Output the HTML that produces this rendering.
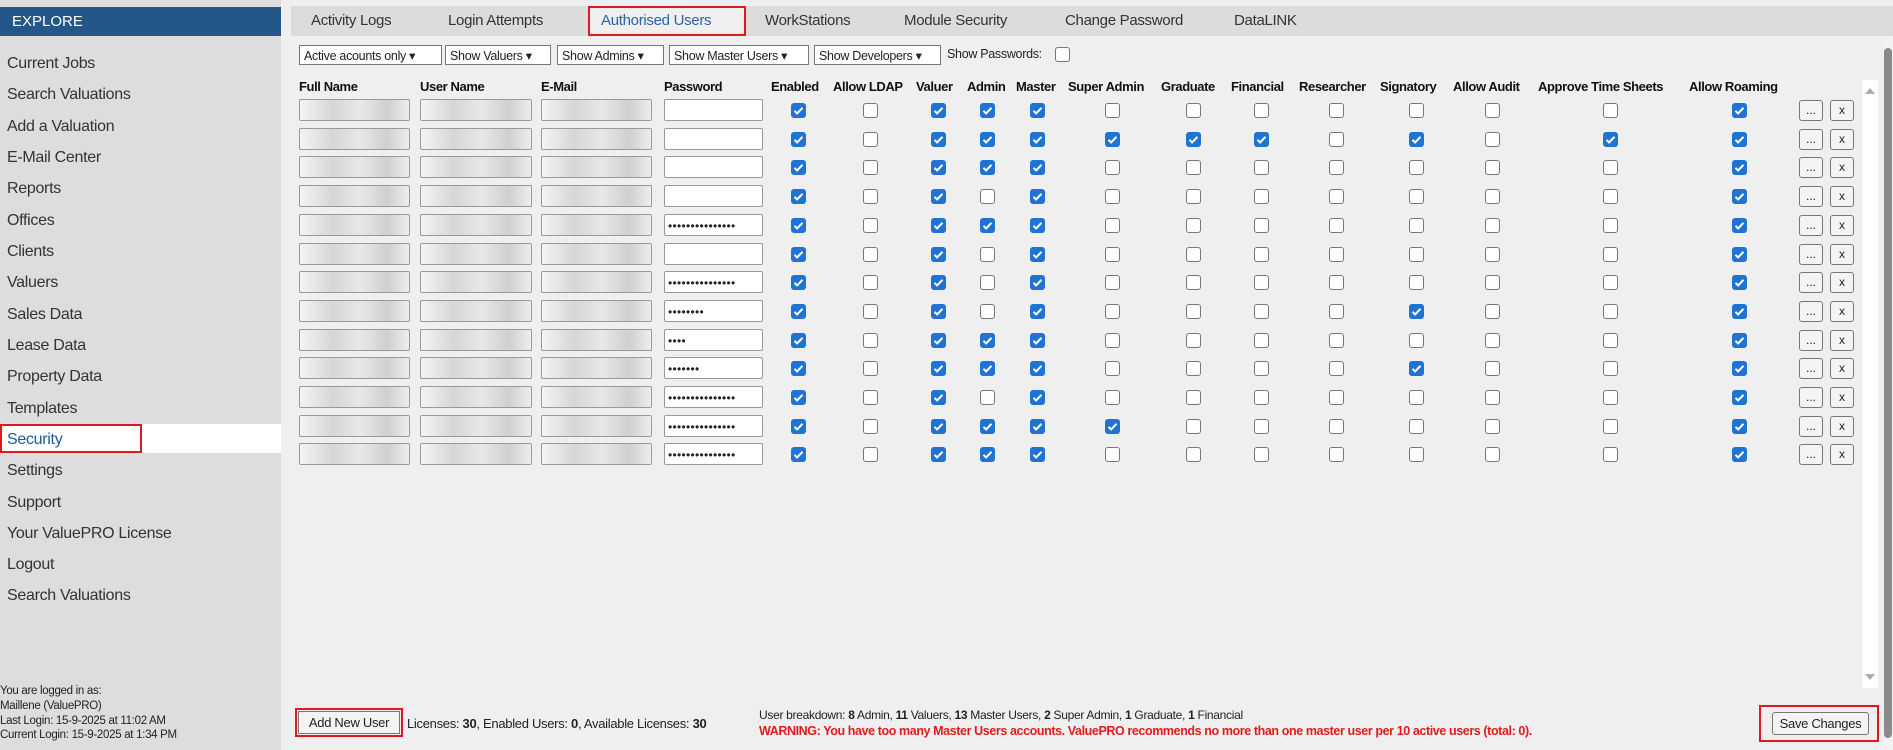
<!DOCTYPE html>
<html><head><meta charset="utf-8">
<style>
*{box-sizing:border-box;margin:0;padding:0}
body{width:1893px;height:750px;overflow:hidden;background:#efeff0;font-family:"Liberation Sans",sans-serif;position:relative;color:#222}
.abs{position:absolute}
#side{left:0;top:0;width:281px;height:750px;background:#dddddf}
#explore{left:0;top:7px;width:281px;height:29px;background:#235789;color:#fff;font-size:15px;padding:6px 0 0 12px}
.nav{left:7px;font-size:16px;color:#333;letter-spacing:-0.3px}
#sec{left:0;top:424px;width:281px;height:29px;background:#fff}
#secbox{left:0;top:424px;width:142px;height:29px;border:2px solid #e0191e}
.login{left:0;font-size:11.5px;color:#222;letter-spacing:-0.3px}
#tabs{left:291px;top:6px;width:1602px;height:30px;background:#dcdcdd}
.tab{top:12px;font-size:15px;color:#333;letter-spacing:-0.3px}
#authbox{left:588px;top:6px;width:158px;height:30px;border:2px solid #e0191e;background:#efeff0}
.sel{top:45px;height:20px;border:1px solid #777;background:#fff;font-size:12.5px;padding:2px 4px;letter-spacing:-0.3px;white-space:nowrap}
.hd{top:79px;font-size:13px;font-weight:bold;color:#111;letter-spacing:-0.4px;white-space:nowrap}
.inp{height:22px;border:1px solid #999;border-radius:2px;background:#fff}
.blur{background:linear-gradient(90deg,#f4f4f4,#d6d6d6 30%,#e8e8e8 55%,#cfcfcf 80%,#eee)}
.pw{font-size:12px;padding:4px 3px;letter-spacing:0.3px;overflow:hidden;white-space:nowrap}
.cb{width:15px;height:15px;border-radius:3px;border:1px solid #777;background:#fff}
.cb.on{background:#1f74d3;border-color:#1f74d3}
.cb svg{display:block;position:absolute;left:0;top:0}
.btn{width:24px;height:21px;border:1px solid #777;border-radius:3px;background:#f4f4f4;font-size:12px;text-align:center;line-height:18px}
#vs{left:1862px;top:80px;width:16px;height:608px;background:#fff}
#os{left:1883px;top:36px;width:10px;height:714px;background:#f2f2f2}
.b{font-weight:bold}
</style></head><body>
<div id="side" class="abs"></div>
<div id="explore" class="abs">EXPLORE</div>
<div id="sec" class="abs"></div>
<div id="secbox" class="abs"></div>
<div class="abs nav" style="top:55px">Current Jobs</div>
<div class="abs nav" style="top:86px">Search Valuations</div>
<div class="abs nav" style="top:118px">Add a Valuation</div>
<div class="abs nav" style="top:149px">E-Mail Center</div>
<div class="abs nav" style="top:180px">Reports</div>
<div class="abs nav" style="top:212px">Offices</div>
<div class="abs nav" style="top:243px">Clients</div>
<div class="abs nav" style="top:274px">Valuers</div>
<div class="abs nav" style="top:306px">Sales Data</div>
<div class="abs nav" style="top:337px">Lease Data</div>
<div class="abs nav" style="top:368px">Property Data</div>
<div class="abs nav" style="top:400px">Templates</div>
<div class="abs nav" style="top:431px;color:#1c5a9a">Security</div>
<div class="abs nav" style="top:462px">Settings</div>
<div class="abs nav" style="top:494px">Support</div>
<div class="abs nav" style="top:525px">Your ValuePRO License</div>
<div class="abs nav" style="top:556px">Logout</div>
<div class="abs nav" style="top:587px">Search Valuations</div>
<div class="abs login" style="top:685px">You are logged in as:</div>
<div class="abs login" style="top:700px">Maillene (ValuePRO)</div>
<div class="abs login" style="top:715px">Last Login: 15-9-2025 at 11:02 AM</div>
<div class="abs login" style="top:729px">Current Login: 15-9-2025 at 1:34 PM</div>

<div id="tabs" class="abs"></div>
<div id="authbox" class="abs"></div>
<div class="abs tab" style="left:311px">Activity Logs</div>
<div class="abs tab" style="left:448px">Login Attempts</div>
<div class="abs tab" style="left:601px;color:#2a62a6">Authorised Users</div>
<div class="abs tab" style="left:765px">WorkStations</div>
<div class="abs tab" style="left:904px">Module Security</div>
<div class="abs tab" style="left:1065px">Change Password</div>
<div class="abs tab" style="left:1234px">DataLINK</div>

<div class="abs sel" style="left:299px;width:143px">Active acounts only ▾</div>
<div class="abs sel" style="left:445px;width:106px">Show Valuers ▾</div>
<div class="abs sel" style="left:557px;width:107px">Show Admins ▾</div>
<div class="abs sel" style="left:669px;width:140px">Show Master Users ▾</div>
<div class="abs sel" style="left:814px;width:127px">Show Developers ▾</div>
<div class="abs" style="left:947px;top:47px;font-size:12.5px;letter-spacing:-0.3px">Show Passwords:</div>
<div class="abs cb" style="left:1055px;top:47px"></div>

<div class="abs hd" style="left:299px">Full Name</div>
<div class="abs hd" style="left:420px">User Name</div>
<div class="abs hd" style="left:541px">E-Mail</div>
<div class="abs hd" style="left:664px">Password</div>
<div class="abs hd" style="left:771px">Enabled</div>
<div class="abs hd" style="left:833px">Allow LDAP</div>
<div class="abs hd" style="left:916px">Valuer</div>
<div class="abs hd" style="left:967px">Admin</div>
<div class="abs hd" style="left:1016px">Master</div>
<div class="abs hd" style="left:1068px">Super Admin</div>
<div class="abs hd" style="left:1161px">Graduate</div>
<div class="abs hd" style="left:1231px">Financial</div>
<div class="abs hd" style="left:1299px">Researcher</div>
<div class="abs hd" style="left:1380px">Signatory</div>
<div class="abs hd" style="left:1453px">Allow Audit</div>
<div class="abs hd" style="left:1538px">Approve Time Sheets</div>
<div class="abs hd" style="left:1689px">Allow Roaming</div>

<div id="vs" class="abs"><div style="margin:8px auto 0;width:0;height:0;border-left:5px solid transparent;border-right:5px solid transparent;border-bottom:6px solid #aaa"></div><div style="position:absolute;bottom:8px;left:3px;width:0;height:0;border-left:5px solid transparent;border-right:5px solid transparent;border-top:6px solid #aaa"></div></div>
<div id="os" class="abs"><div style="position:absolute;top:12px;left:1px;width:8px;height:690px;background:#8a8a8a;border-radius:4px"></div></div>
<div id="rows"></div>

<div class="abs" style="left:295px;top:708px;width:108px;height:29px;border:2px solid #e0191e"></div>
<div class="abs" style="left:298px;top:711px;width:102px;height:23px;border:1px solid #777;background:#f4f4f4;font-size:13px;text-align:center;line-height:21px;letter-spacing:-0.3px">Add New User</div>
<div class="abs" style="left:407px;top:716px;font-size:13px;letter-spacing:-0.3px">Licenses: <span class="b">30</span>, Enabled Users: <span class="b">0</span>, Available Licenses: <span class="b">30</span></div>
<div class="abs" style="left:759px;top:708px;font-size:12px;letter-spacing:-0.3px">User breakdown: <span class="b">8</span> Admin, <span class="b">11</span> Valuers, <span class="b">13</span> Master Users, <span class="b">2</span> Super Admin, <span class="b">1</span> Graduate, <span class="b">1</span> Financial</div>
<div class="abs" style="left:759px;top:724px;font-size:12.5px;font-weight:bold;color:#e11b1b;letter-spacing:-0.4px">WARNING: You have too many Master Users accounts. ValuePRO recommends no more than one master user per 10 active users (total: 0).</div>
<div class="abs" style="left:1759px;top:705px;width:120px;height:37px;border:2px solid #e0191e"></div>
<div class="abs" style="left:1772px;top:712px;width:97px;height:23px;border:1px solid #777;border-radius:3px;background:#f4f4f4;font-size:13px;text-align:center;line-height:21px;letter-spacing:-0.3px">Save Changes</div>

<script>
var cols=[798,870,938,987,1037,1112,1193,1261,1336,1416,1492,1610,1739];
var st=["1011100000001","1011111101011","1011100000001","1010100000001","1011100000001","1010100000001","1010100000001","1010100001001","1011100000001","1011100001001","1010100000001","1011110000001","1011100000001"];
var pw=["","","","","•••••••••••••••","","•••••••••••••••","••••••••","••••","•••••••","•••••••••••••••","•••••••••••••••","•••••••••••••••"];
var chk='<svg width="13" height="13" viewBox="0 0 13 13"><path d="M2.5 6.8l2.6 2.6L10.5 3.8" stroke="#fff" stroke-width="2" fill="none"/></svg>';
var h="";
for(var r=0;r<13;r++){
 var y=Math.round(110+r*28.7);
 var t=y-11;
 h+='<div class="abs inp blur" style="left:299px;top:'+t+'px;width:111px"></div>';
 h+='<div class="abs inp blur" style="left:420px;top:'+t+'px;width:112px"></div>';
 h+='<div class="abs inp blur" style="left:541px;top:'+t+'px;width:111px"></div>';
 h+='<div class="abs inp pw" style="left:664px;top:'+t+'px;width:99px">'+pw[r]+'</div>';
 for(var c=0;c<13;c++){
  var on=st[r][c]=="1";
  h+='<div class="abs cb'+(on?' on':'')+'" style="left:'+(cols[c]-7)+'px;top:'+(y-7)+'px">'+(on?chk:'')+'</div>';
 }
 h+='<div class="abs btn" style="left:1799px;top:'+(y-10)+'px">...</div>';
 h+='<div class="abs btn" style="left:1830px;top:'+(y-10)+'px">x</div>';
}
document.getElementById("rows").innerHTML=h;
</script>
</body></html>
